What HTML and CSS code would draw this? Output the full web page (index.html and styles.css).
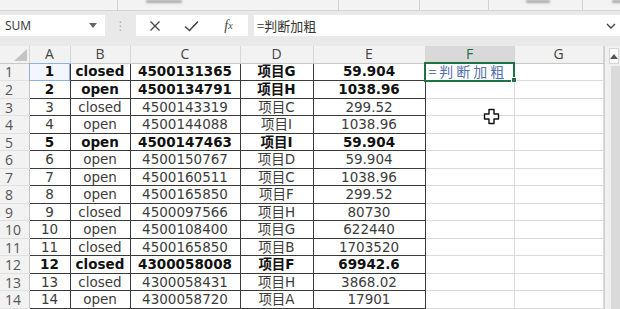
FILE: index.html
```html
<!DOCTYPE html>
<html lang="zh-CN">
<head>
  <meta charset="UTF-8" />
  <title>判断加粗</title>
  <link rel="stylesheet" href="styles.css">
</head>
<body>
  <div class="ribbon">
    <div class="seg" style="width:117px"></div>
    <div class="seg" style="width:220px"><i class="smudge" style="margin-left:28px;width:36px"></i></div>
    <div class="seg" style="width:80px"></div>
    <div class="seg" style="width:68px"></div>
    <div class="seg" style="width:93px"><i class="smudge" style="margin-left:37px;width:24px"></i></div>
    <div class="seg last"><i class="smudge" style="margin-left:29px;width:14px"></i></div>
  </div>

  <div class="fbar">
    <div class="namebox">
      <span>SUM</span>
      <svg width="8" height="5" viewBox="0 0 8 5"><path d="M0 0 L8 0 L4 5 Z" fill="#666"/></svg>
    </div>
    <div class="dots">⋮</div>
    <div class="fxbox">
      <span class="slot">
        <svg width="12" height="12" viewBox="0 0 12 12"><path d="M1.5 1.5 L10.5 10.5 M10.5 1.5 L1.5 10.5" stroke="#444" stroke-width="1.3" fill="none"/></svg>
      </span>
      <span class="slot">
        <svg width="15" height="12" viewBox="0 0 15 12"><path d="M1 6.5 L5.5 10.5 L14 1.5" stroke="#444" stroke-width="1.6" fill="none"/></svg>
      </span>
      <span class="slot fx">f<small>x</small></span>
    </div>
    <div class="finput">
      <span>=判断加粗</span>
      <svg width="10" height="6" viewBox="0 0 10 6"><path d="M1 1 L5 5 L9 1" stroke="#444" stroke-width="1.4" fill="none"/></svg>
    </div>
  </div>

  <div class="sheet">
    <table class="grid">
      <colgroup>
        <col style="width:29px"><col style="width:41px"><col style="width:60px"><col style="width:110px">
        <col style="width:73px"><col style="width:112px"><col style="width:89px"><col style="width:89px">
      </colgroup>
      <tr class="head">
        <th class="corner"><svg width="13" height="12" viewBox="0 0 13 12"><path d="M13 0 L13 12 L0 12 Z" fill="#c4c4c4"/></svg></th>
        <th>A</th><th>B</th><th>C</th><th>D</th><th>E</th><th class="cur">F</th><th>G</th>
      </tr>
      <tr class="b"><td class="rh">1</td><td class="d ref">1</td><td class="d">closed</td><td class="d">4500131365</td><td class="d">项目G</td><td class="d">59.904</td><td class="e sel"><span class="edit">=判断加粗</span></td><td class="e"></td></tr>
      <tr class="b"><td class="rh">2</td><td class="d">2</td><td class="d">open</td><td class="d">4500134791</td><td class="d">项目H</td><td class="d">1038.96</td><td class="e"></td><td class="e"></td></tr>
      <tr><td class="rh">3</td><td class="d">3</td><td class="d">closed</td><td class="d">4500143319</td><td class="d">项目C</td><td class="d">299.52</td><td class="e"></td><td class="e"></td></tr>
      <tr><td class="rh">4</td><td class="d">4</td><td class="d">open</td><td class="d">4500144088</td><td class="d">项目I</td><td class="d">1038.96</td><td class="e"></td><td class="e"></td></tr>
      <tr class="b"><td class="rh">5</td><td class="d">5</td><td class="d">open</td><td class="d">4500147463</td><td class="d">项目I</td><td class="d">59.904</td><td class="e"></td><td class="e"></td></tr>
      <tr><td class="rh">6</td><td class="d">6</td><td class="d">open</td><td class="d">4500150767</td><td class="d">项目D</td><td class="d">59.904</td><td class="e"></td><td class="e"></td></tr>
      <tr><td class="rh">7</td><td class="d">7</td><td class="d">open</td><td class="d">4500160511</td><td class="d">项目C</td><td class="d">1038.96</td><td class="e"></td><td class="e"></td></tr>
      <tr><td class="rh">8</td><td class="d">8</td><td class="d">open</td><td class="d">4500165850</td><td class="d">项目F</td><td class="d">299.52</td><td class="e"></td><td class="e"></td></tr>
      <tr><td class="rh">9</td><td class="d">9</td><td class="d">closed</td><td class="d">4500097566</td><td class="d">项目H</td><td class="d">80730</td><td class="e"></td><td class="e"></td></tr>
      <tr><td class="rh">10</td><td class="d">10</td><td class="d">open</td><td class="d">4500108400</td><td class="d">项目G</td><td class="d">622440</td><td class="e"></td><td class="e"></td></tr>
      <tr><td class="rh">11</td><td class="d">11</td><td class="d">closed</td><td class="d">4500165850</td><td class="d">项目B</td><td class="d">1703520</td><td class="e"></td><td class="e"></td></tr>
      <tr class="b"><td class="rh">12</td><td class="d">12</td><td class="d">closed</td><td class="d">4300058008</td><td class="d">项目F</td><td class="d">69942.6</td><td class="e"></td><td class="e"></td></tr>
      <tr><td class="rh">13</td><td class="d">13</td><td class="d">closed</td><td class="d">4300058431</td><td class="d">项目H</td><td class="d">3868.02</td><td class="e"></td><td class="e"></td></tr>
      <tr><td class="rh">14</td><td class="d">14</td><td class="d">open</td><td class="d">4300058720</td><td class="d">项目A</td><td class="d">17901</td><td class="e"></td><td class="e"></td></tr>
    </table>

    <div class="vscroll">
      <div class="up"><svg width="8" height="5" viewBox="0 0 8 5"><path d="M0 5 L4 0 L8 5 Z" fill="#555"/></svg></div>
      <div class="thumb"></div>
    </div>

    <!-- 鼠标指针 -->
    <svg class="pointer" width="17" height="17" viewBox="0 0 17 17">
      <path d="M6 1.5 H11 V6 H15.5 V11 H11 V15.5 H6 V11 H1.5 V6 H6 Z" fill="#fff" stroke="#111" stroke-width="1.4" stroke-linejoin="round"/>
    </svg>
  </div>
</body>
</html>
```

FILE: styles.css
```css
body {
  margin: 0;
  width: 620px;
  height: 309px;
  overflow: hidden;
  background: #e9e9e9;
  font-family: "DejaVu Sans", "Noto Sans CJK SC", sans-serif;
}

.ribbon {
  display: flex;
  height: 10px;
  background: #f3f3f3;
  border-bottom: 1px solid #d4d4d4;
  overflow: hidden;
}

.seg {
  height: 10px;
  border-right: 1px solid #d2d2d2;
  overflow: hidden;
}

.seg.last {
  flex: 1;
  border-right: none;
}

.smudge {
  display: block;
  height: 3px;
  background: #8a8a8a;
  border-radius: 1px;
  filter: blur(0.8px);
  opacity: 0.7;
}

.fbar {
  display: flex;
  height: 21px;
  margin: 4px 0 10px;
}

.namebox {
  width: 105px;
  box-sizing: border-box;
  padding: 0 8px 0 5px;
  background: #fff;
  display: flex;
  align-items: center;
  justify-content: space-between;
  font: 12px "Open Sans", sans-serif;
  color: #333;
}

.dots {
  width: 31px;
  display: flex;
  align-items: center;
  justify-content: center;
  color: #b0b0b0;
  font-size: 12px;
}

.fxbox {
  width: 112px;
  background: #fff;
  display: flex;
  align-items: center;
}

.slot {
  width: 37px;
  display: flex;
  justify-content: center;
  align-items: center;
}

.fx {
  font: italic 14px "Liberation Serif", serif;
  color: #444;
}

.fx small {
  font-size: 10px;
}

.finput {
  flex: 1;
  margin-left: 6px;
  padding: 0 4px 0 3px;
  background: #fff;
  display: flex;
  align-items: center;
  justify-content: space-between;
  font: 13px "Noto Sans CJK SC", sans-serif;
  color: #333;
}

.sheet {
  position: relative;
  display: flex;
  height: 263px;
}

.grid {
  width: 603px;
  table-layout: fixed;
  border-collapse: collapse;
  background: #fff;
}

.grid tr.head {
  height: 17px;
}

.grid th {
  padding: 0;
  background: #f2f2f2;
  border-right: 1px solid #d6d6d6;
  border-bottom: 1px solid #c8c8c8;
  font: 14px/14px "Open Sans", sans-serif;
  color: #444;
}

.grid th.corner {
  text-align: right;
  vertical-align: bottom;
  padding: 0 2px 2px 0;
  line-height: 0;
}

.grid th.cur {
  background: #d9d9d9;
  color: #1e6e43;
  border-bottom: 2px solid #1f7244;
}

.grid tr {
  height: 17.4px;
}

.grid td {
  padding: 0;
  text-align: center;
  white-space: nowrap;
  overflow: visible;
  font-size: 13.5px;
  line-height: 15px;
  color: #3c3c3c;
}

.grid tr.b td.d {
  font-weight: bold;
  color: #111;
}

.grid td.rh {
  background: #f2f2f2;
  text-align: left;
  padding-left: 5px;
  border-right: 1px solid #c4c4c4;
  border-bottom: 1px solid #e0e0e0;
  font: 14px/15px "Open Sans", sans-serif;
  color: #555;
}

.grid td.d {
  border: 1px solid #3a3a3a;
}

.grid td.ref {
  background: #f3f6fc;
  outline: 1px solid #8fb0e0;
  outline-offset: -1px;
}

.grid td.e {
  border-right: 1px solid #dadada;
  border-bottom: 1px solid #dadada;
}

.grid td.sel {
  position: relative;
  text-align: left;
  outline: 2px solid #1f7244;
  outline-offset: -1px;
}

.grid td.sel::after {
  content: "";
  position: absolute;
  right: -3px;
  bottom: -3px;
  width: 4px;
  height: 4px;
  background: #1f7244;
  border: 1px solid #fff;
}

.edit {
  padding-left: 3px;
  font: 14px/14px "Noto Sans CJK SC", sans-serif;
  letter-spacing: 3px;
  color: #5672aa;
}

.vscroll {
  flex: 1;
  display: flex;
  flex-direction: column;
  background: #f0f0f0;
  border-left: 1px solid #cfcfcf;
}

.up {
  height: 14px;
  margin: 2px 1px 0 4px;
  background: #fafafa;
  border: 1px solid #d6d6d6;
  display: flex;
  align-items: center;
  justify-content: center;
}

.thumb {
  flex: 1;
  margin: 2px 0 0 6px;
  background: #dadada;
}

.pointer {
  position: absolute;
  left: 483px;
  top: 62px;
}
```
